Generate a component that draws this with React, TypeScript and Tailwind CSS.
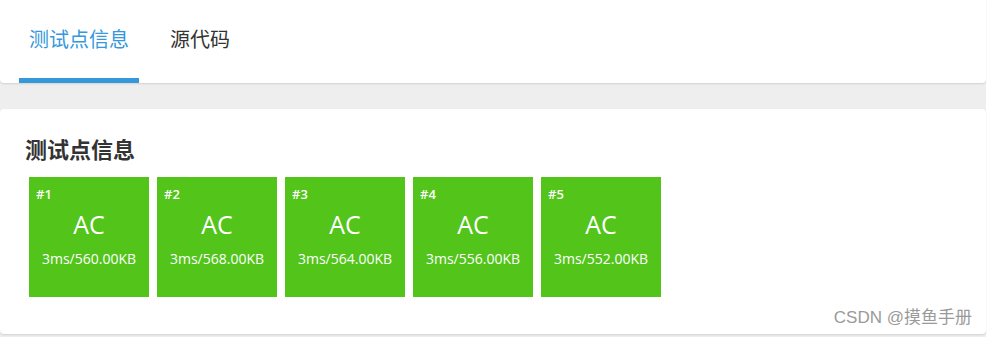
import React from 'react';

interface TestPoint {
  id: number;
  status: string;
  time: string;
  memory: string;
}

const points: TestPoint[] = [
  { id: 1, status: 'AC', time: '3ms', memory: '560.00KB' },
  { id: 2, status: 'AC', time: '3ms', memory: '568.00KB' },
  { id: 3, status: 'AC', time: '3ms', memory: '564.00KB' },
  { id: 4, status: 'AC', time: '3ms', memory: '556.00KB' },
  { id: 5, status: 'AC', time: '3ms', memory: '552.00KB' },
];

const font = { fontFamily: '"Open Sans", "Noto Sans CJK SC", sans-serif' };

const App: React.FC = () => {
  return (
    <div className="relative min-h-[337px] w-[986px] bg-[#eeeeee]" style={font}>
      {/* tabs */}
      <div className="flex h-[83px] items-end rounded-b-[4px] bg-white pl-[19px] shadow-[0_1px_2px_rgba(0,0,0,0.12)]">
        <div className="flex h-full w-[120px] flex-col items-center justify-center border-b-[5px] border-[#3498db] pt-[2px] text-[20px] text-[#3498db]">
          测试点信息
        </div>
        <div className="ml-[21px] flex h-full flex-col justify-center px-[10px] pb-[3px] text-[20px] text-[#333]">
          源代码
        </div>
      </div>

      {/* test points */}
      <div className="mt-[26px] rounded-[4px] bg-white px-[29px] pb-[37px] pt-[24px] shadow-[0_1px_2px_rgba(0,0,0,0.12)]">
        <h2 className="-ml-[4px] text-[22px] font-bold leading-[32px] text-[#333]">测试点信息</h2>
        <div className="mt-[12px] flex gap-[8px]">
          {points.map(p => (
            <div key={p.id} className="flex h-[120px] w-[120px] flex-col bg-[#52c41a] px-[7px] pt-[8px] text-white">
              <div className="text-[13px] font-semibold leading-[18px]">#{p.id}</div>
              <div className="mt-[6px] text-center text-[25px] leading-[30px]">{p.status}</div>
              <div className="mt-[10px] text-center text-[14px] font-medium leading-[20px]">
                {p.time}/{p.memory}
              </div>
            </div>
          ))}
        </div>
      </div>

      <div className="absolute bottom-[7px] right-[14px] text-[17px] text-[#9a9a9a]" style={{ fontFamily: '"Liberation Sans", "Noto Sans CJK SC", sans-serif' }}>
        CSDN @摸鱼手册
      </div>
    </div>
  );
};

export default App;
